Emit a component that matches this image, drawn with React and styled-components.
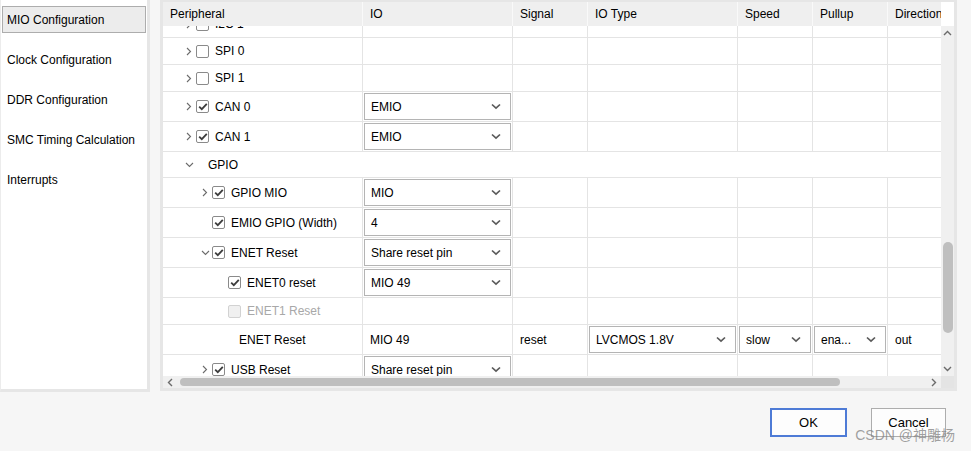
import React, { useLayoutEffect, useRef } from "react";
import styled, { createGlobalStyle } from "styled-components";

const Global = createGlobalStyle`
  html, body { margin: 0; padding: 0; background: #f6f6f6; }
  body { font-family: "Liberation Sans", Arial, sans-serif; font-size: 12px; color: #000; }
  * { box-sizing: border-box; }
`;

const Page = styled.div`
  width: 971px;
  height: 451px;
  position: relative;
  overflow: hidden;
  background: #f6f6f6;
  display: flex;
  flex-direction: column;
`;

const Main = styled.div`
  display: flex;
  align-items: flex-start;
  gap: 10px;
  height: 392px;
`;

const NavPanel = styled.div`
  width: 150px;
  height: 392px;
  background: #fff;
  border-left: 1px solid #ececec;
  border-right: 3px solid #e6e6e6;
  border-bottom: 3px solid #e6e6e6;
  padding: 6px 1px 0;
  display: flex;
  flex-direction: column;
  gap: 13px;
`;

const NavItem = styled.div`
  height: 27px;
  display: flex;
  align-items: center;
  padding-left: 4px;
  border: 1px solid ${(p) => (p.$selected ? "#adadad" : "transparent")};
  background: ${(p) => (p.$selected ? "#ececec" : "transparent")};
  white-space: nowrap;
`;

const TablePanel = styled.div`
  width: 797px;
  height: 391px;
  border: 3px solid #e6e6e6;
  border-top-width: 2px;
  display: grid;
  grid-template-columns: 778px 13px;
  grid-template-rows: 24px 350px 12px;
  background: #fff;
`;

const HeaderClip = styled.div`
  overflow: hidden;
  background: #efefef;
`;

const HeaderRow = styled.div`
  display: flex;
  width: 800px;
  height: 24px;
`;

const HeaderCell = styled.div`
  flex: 0 0 ${(p) => p.$w}px;
  border-right: 1px solid #f9f9f9;
  display: flex;
  align-items: center;
  padding-left: 7px;
  white-space: nowrap;
  overflow: hidden;
`;

const HeadSpacer = styled.div`
  background: #fff;
`;

const Viewport = styled.div`
  overflow: hidden;
  background: #fff;
`;

const Body = styled.div`
  width: 800px;
`;

const Row = styled.div`
  display: flex;
  height: ${(p) => p.$h}px;
  border-bottom: 1px solid #e4e4e4;
`;

const Cell = styled.div`
  flex: 0 0 ${(p) => p.$w}px;
  border-right: 1px solid #e4e4e4;
  display: flex;
  align-items: center;
  padding-left: ${(p) => (p.$combo ? 1 : 7)}px;
  padding-right: ${(p) => (p.$combo ? 1 : 0)}px;
  white-space: nowrap;
  overflow: hidden;
`;

const TreeCell = styled(Cell)`
  padding-left: ${(p) => p.$indent}px;
`;

const GroupCell = styled.div`
  flex: 1;
  display: flex;
  align-items: center;
  padding-left: 21px;
`;

const ChevronSlot = styled.span`
  flex: 0 0 10px;
  height: 10px;
  margin-right: 2px;
  display: flex;
  align-items: center;
  justify-content: center;
`;

const Box = styled.span`
  flex: 0 0 13px;
  width: 13px;
  height: 13px;
  border: 1px solid ${(p) => (p.$disabled ? "#d2d2d2" : "#8a8a8a")};
  background: ${(p) => (p.$disabled ? "#f0f0f0" : "#fff")};
  border-radius: 2px;
  margin-right: 6px;
  display: flex;
  align-items: center;
  justify-content: center;
`;

const Label = styled.span`
  color: ${(p) => (p.$disabled ? "#a8a8a8" : "#000")};
  margin-left: ${(p) => p.$ml || 0}px;
`;

const Combo = styled.div`
  flex: 1;
  height: 27px;
  border: 1px solid #b4b4b4;
  background: #fff;
  display: flex;
  align-items: center;
  justify-content: space-between;
  padding: 0 9px 0 6px;
  white-space: nowrap;
`;

const VScroll = styled.div`
  background: #f0f0f0;
  display: flex;
  flex-direction: column;
  align-items: center;
`;

const ArrowBox = styled.div`
  flex: 0 0 14px;
  width: 13px;
  height: 14px;
  display: flex;
  align-items: center;
  justify-content: center;
`;

const VThumb = styled.div`
  width: 10px;
  height: 91px;
  margin-top: ${(p) => p.$offset}px;
  border-radius: 5px;
  background: #bfbfbf;
`;

const Fill = styled.div`
  flex: 1;
`;

const HScroll = styled.div`
  background: #f0f0f0;
  display: flex;
  align-items: center;
`;

const HThumb = styled.div`
  height: 8px;
  width: 660px;
  margin-left: ${(p) => p.$offset}px;
  border-radius: 4px;
  background: #bfbfbf;
`;

const Corner = styled.div`
  background: #e4e4e4;
`;

const Footer = styled.div`
  flex: 1;
  display: flex;
  justify-content: flex-end;
  align-items: flex-start;
  gap: 24px;
  padding: 16px 25px 0 0;
`;

const Button = styled.div`
  width: ${(p) => (p.$primary ? 77 : 75)}px;
  height: 29px;
  border: ${(p) => (p.$primary ? "2px solid #4e7bd6" : "1px solid #adadad")};
  background: #fdfdfd;
  display: flex;
  align-items: center;
  justify-content: center;
  font-size: 13px;
`;

const Watermark = styled.div`
  position: absolute;
  right: 16px;
  bottom: 7px;
  font-family: "Liberation Sans", "Noto Sans CJK SC", sans-serif;
  font-size: 14px;
  color: rgba(130, 130, 130, 0.75);
  white-space: nowrap;
`;

const Chevron = ({ dir }) =>
  dir === "down" ? (
    <svg width="9" height="6" viewBox="0 0 9 6">
      <path d="M1 1 L4.5 4.5 L8 1" fill="none" stroke="#6b6b6b" strokeWidth="1.1" />
    </svg>
  ) : dir === "up" ? (
    <svg width="9" height="6" viewBox="0 0 9 6">
      <path d="M1 5 L4.5 1.5 L8 5" fill="none" stroke="#6b6b6b" strokeWidth="1.4" />
    </svg>
  ) : dir === "left" ? (
    <svg width="6" height="9" viewBox="0 0 6 9">
      <path d="M5 1 L1.5 4.5 L5 8" fill="none" stroke="#6b6b6b" strokeWidth="1.4" />
    </svg>
  ) : (
    <svg width="6" height="9" viewBox="0 0 6 9">
      <path d="M1 1 L4.5 4.5 L1 8" fill="none" stroke="#6b6b6b" strokeWidth="1.1" />
    </svg>
  );

const ComboArrow = () => (
  <svg width="10" height="7" viewBox="0 0 10 7">
    <path d="M1 1.5 L5 5.2 L9 1.5" fill="none" stroke="#5a5a5a" strokeWidth="1.7" />
  </svg>
);

const Check = ({ checked, disabled }) => (
  <Box $disabled={disabled}>
    {checked && (
      <svg width="10" height="9" viewBox="0 0 10 9">
        <path d="M1.2 4.6 L3.8 7.2 L8.8 1.8" fill="none" stroke="#3d3d3d" strokeWidth="1.8" />
      </svg>
    )}
  </Box>
);

const W = [200, 150, 75, 150, 75, 75, 75];
const HEAD = ["Peripheral", "IO", "Signal", "IO Type", "Speed", "Pullup", "Direction"];

const rows = [
  { h: 27, level: 1, chev: "right", check: false, label: "I2C 1" },
  { h: 27, level: 1, chev: "right", check: false, label: "SPI 0" },
  { h: 27, level: 1, chev: "right", check: false, label: "SPI 1" },
  { h: 30, level: 1, chev: "right", check: true, label: "CAN 0", io: "EMIO" },
  { h: 30, level: 1, chev: "right", check: true, label: "CAN 1", io: "EMIO" },
  { h: 26, group: true, label: "GPIO" },
  { h: 30, level: 2, chev: "right", check: true, label: "GPIO MIO", io: "MIO" },
  { h: 30, level: 2, chev: null, check: true, label: "EMIO GPIO (Width)", io: "4" },
  { h: 30, level: 2, chev: "down", check: true, label: "ENET Reset", io: "Share reset pin" },
  { h: 30, level: 3, chev: null, check: true, label: "ENET0 reset", io: "MIO 49" },
  { h: 27, level: 3, chev: null, check: false, disabled: true, label: "ENET1 Reset" },
  { h: 30, signal: true },
  { h: 30, level: 2, chev: "right", check: true, label: "USB Reset", io: "Share reset pin" },
];

const ComboCell = ({ w, value }) => (
  <Cell $w={w} $combo>
    <Combo>
      <span>{value}</span>
      <ComboArrow />
    </Combo>
  </Cell>
);

const EmptyCells = ({ from }) =>
  W.slice(from).map((w, i) => <Cell key={i} $w={w} />);

const TableRow = ({ r }) => {
  if (r.group) {
    return (
      <Row $h={r.h}>
        <GroupCell>
          <ChevronSlot>
            <Chevron dir="down" />
          </ChevronSlot>
          <Label $ml={12}>{r.label}</Label>
        </GroupCell>
      </Row>
    );
  }
  if (r.signal) {
    return (
      <Row $h={r.h}>
        <TreeCell $w={W[0]} $indent={76}>
          ENET Reset
        </TreeCell>
        <Cell $w={W[1]}>MIO 49</Cell>
        <Cell $w={W[2]}>reset</Cell>
        <ComboCell w={W[3]} value="LVCMOS 1.8V" />
        <ComboCell w={W[4]} value="slow" />
        <ComboCell w={W[5]} value="ena..." />
        <Cell $w={W[6]}>out</Cell>
      </Row>
    );
  }
  return (
    <Row $h={r.h}>
      <TreeCell $w={W[0]} $indent={21 + 16 * (r.level - 1)}>
        <ChevronSlot>{r.chev && <Chevron dir={r.chev} />}</ChevronSlot>
        <Check checked={r.check} disabled={r.disabled} />
        <Label $disabled={r.disabled}>{r.label}</Label>
      </TreeCell>
      {r.io ? <ComboCell w={W[1]} value={r.io} /> : <Cell $w={W[1]} />}
      <EmptyCells from={2} />
    </Row>
  );
};

export default function App() {
  const vp = useRef(null);
  useLayoutEffect(() => {
    if (vp.current) vp.current.scrollTop = 15;
  }, []);

  return (
    <>
      <Global />
      <Page>
        <Main>
          <NavPanel>
            <NavItem $selected>MIO Configuration</NavItem>
            <NavItem>Clock Configuration</NavItem>
            <NavItem>DDR Configuration</NavItem>
            <NavItem>SMC Timing Calculation</NavItem>
            <NavItem>Interrupts</NavItem>
          </NavPanel>
          <TablePanel>
            <HeaderClip>
              <HeaderRow>
                {HEAD.map((h, i) => (
                  <HeaderCell key={h} $w={W[i]}>
                    {h}
                  </HeaderCell>
                ))}
              </HeaderRow>
            </HeaderClip>
            <HeadSpacer />
            <Viewport ref={vp}>
              <Body>
                {rows.map((r, i) => (
                  <TableRow key={i} r={r} />
                ))}
              </Body>
            </Viewport>
            <VScroll>
              <ArrowBox>
                <Chevron dir="up" />
              </ArrowBox>
              <VThumb $offset={202} />
              <Fill />
              <ArrowBox>
                <svg width="9" height="6" viewBox="0 0 9 6">
                  <path d="M1 1 L4.5 4.5 L8 1" fill="none" stroke="#6b6b6b" strokeWidth="1.4" />
                </svg>
              </ArrowBox>
            </VScroll>
            <HScroll>
              <ArrowBox>
                <Chevron dir="left" />
              </ArrowBox>
              <HThumb $offset={3} />
              <Fill />
              <ArrowBox>
                <svg width="6" height="9" viewBox="0 0 6 9">
                  <path d="M1 1 L4.5 4.5 L1 8" fill="none" stroke="#6b6b6b" strokeWidth="1.4" />
                </svg>
              </ArrowBox>
            </HScroll>
            <Corner />
          </TablePanel>
        </Main>
        <Footer>
          <Button $primary>OK</Button>
          <Button>Cancel</Button>
        </Footer>
        <Watermark>CSDN @神雕杨</Watermark>
      </Page>
    </>
  );
}
